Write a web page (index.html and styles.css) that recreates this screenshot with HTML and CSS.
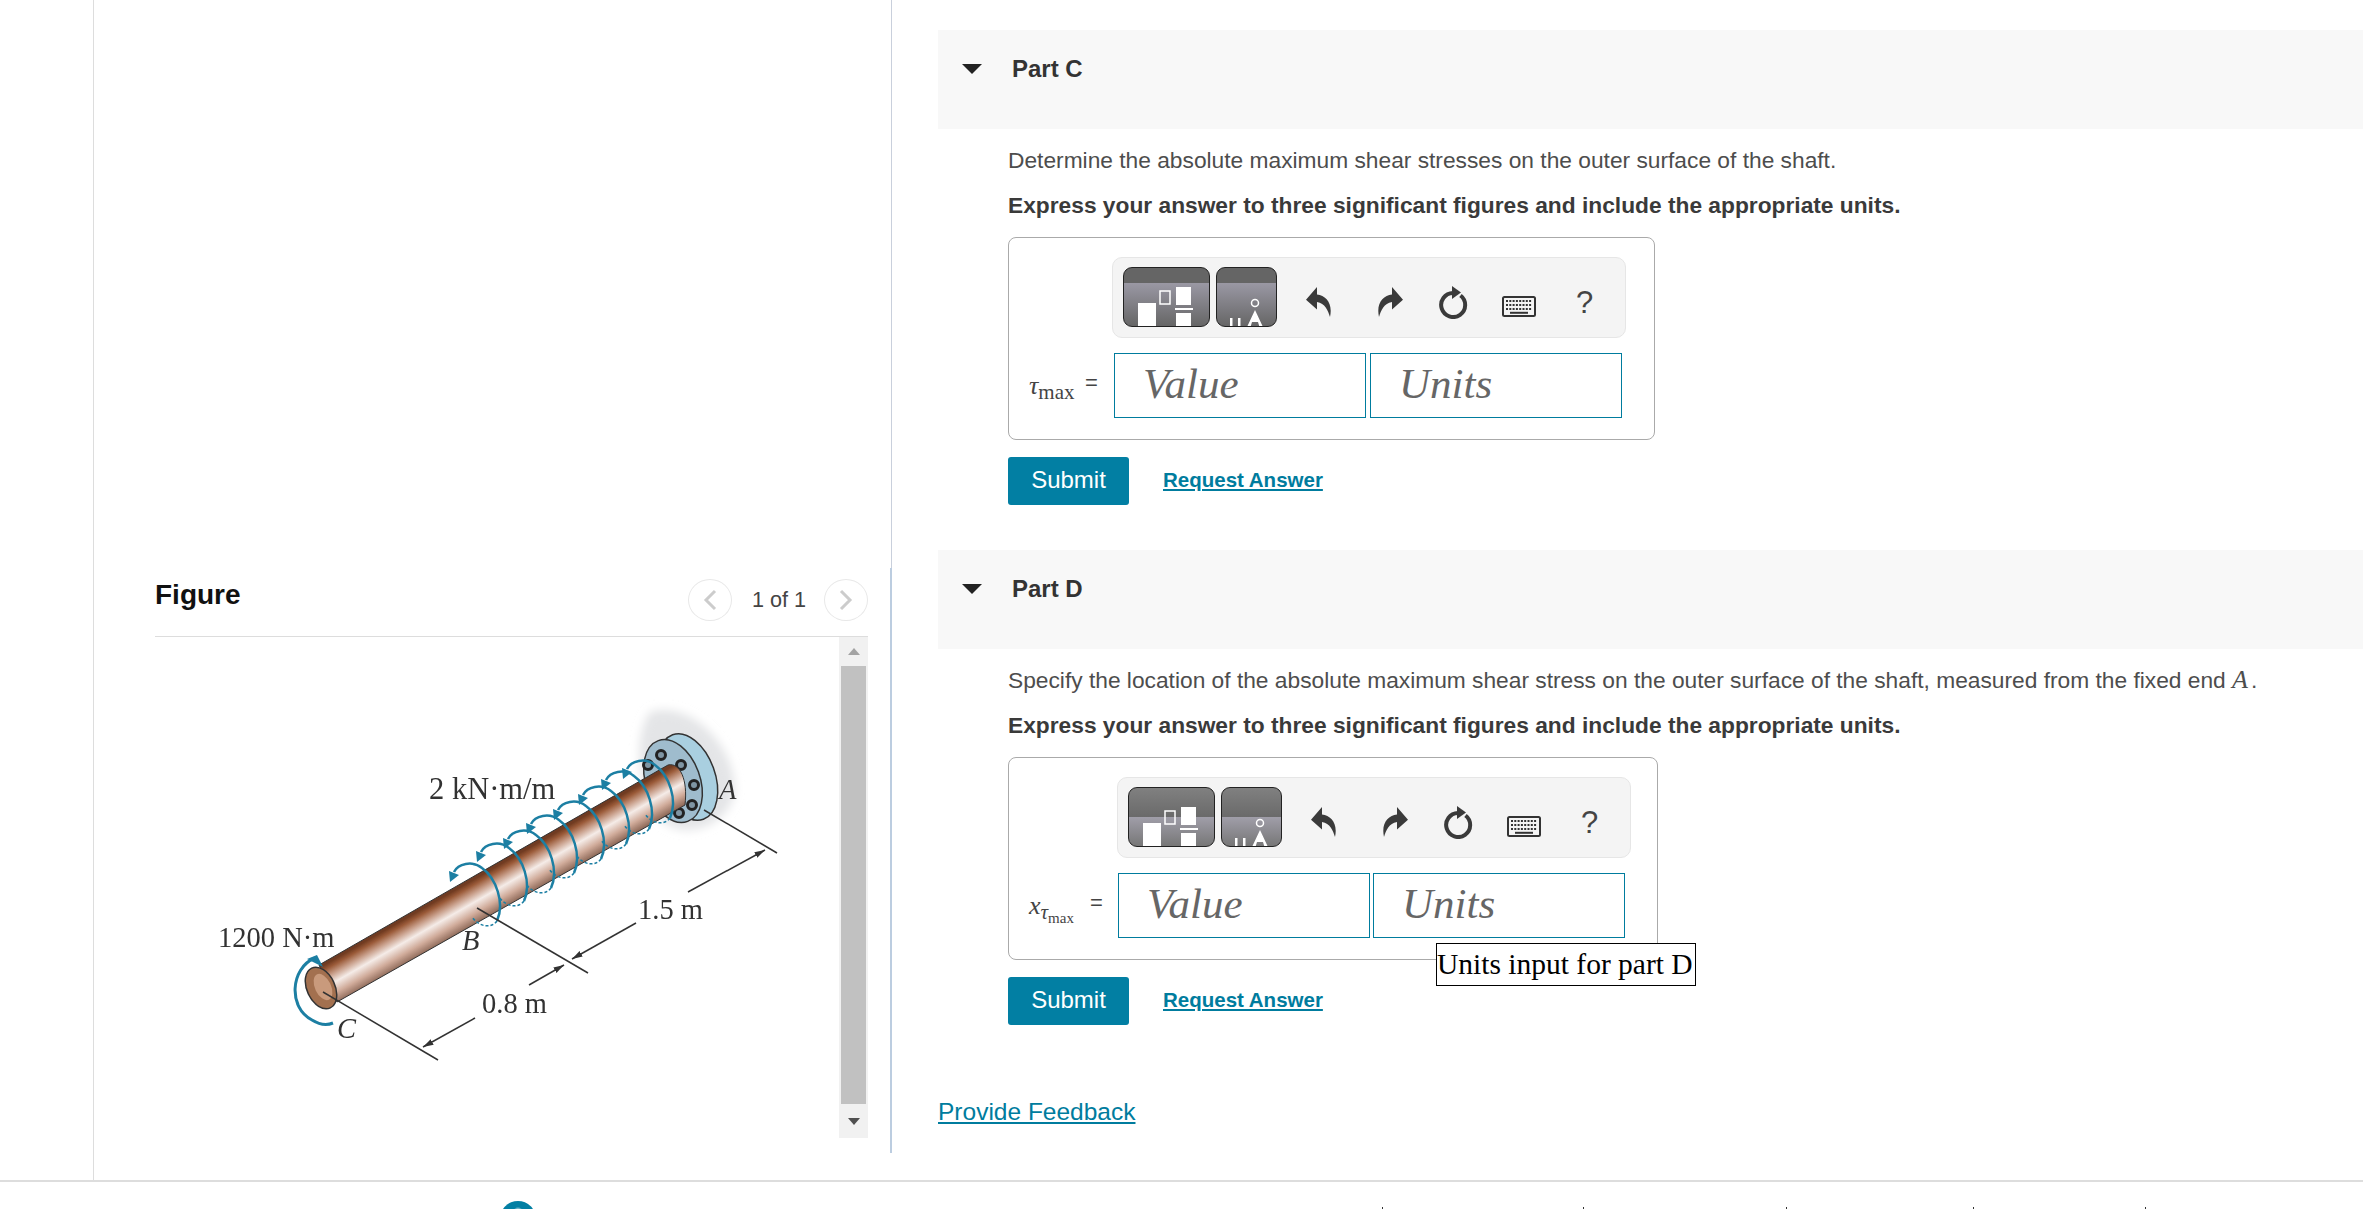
FILE: index.html
```html
<!DOCTYPE html>
<html lang="en">
<head>
<meta charset="utf-8">
<title>Parts C and D</title>
<link rel="stylesheet" href="styles.css">
</head>
<body>
<svg class="defs" width="0" height="0" aria-hidden="true">
  <defs>
    <symbol id="i-undo" viewBox="0 0 26 28" preserveAspectRatio="none"><path d="M0 12 L11 0 V7 C20 8 27 15 24 28 C22 22 19 15 11 14 V21 Z"/></symbol>
    <symbol id="i-reset" viewBox="0 0 30 33">
      <path class="ring" d="M22.500 9.500 A12 12 0 1 1 15 7"/>
      <path d="M14 0 L23 6.500 L14 13 Z"/>
    </symbol>
    <symbol id="i-kbd" viewBox="0 0 34 21">
      <rect x="1" y="1" width="32" height="19" rx="1.500" class="kbd-frame"/>
      <path class="kbd-keys" d="M4 5 H30 M4 9 H30 M4 13 H30"/>
      <path class="kbd-bar" d="M8 16.800 H26"/>
    </symbol>
    <symbol id="i-frac" viewBox="0 0 87 60">
      <rect x="15" y="36" width="18" height="24" class="fill-w"/>
      <rect x="37" y="24" width="10" height="13" class="line-w"/>
      <rect x="53" y="20" width="15" height="18" class="fill-w"/>
      <rect x="52" y="41" width="18" height="2" class="fill-w"/>
      <rect x="53" y="46" width="15" height="14" class="fill-w"/>
    </symbol>
    <symbol id="i-unit" viewBox="0 0 61 60">
      <path class="fill-w" d="M14 51 h2.500 v9 h-2.500 Z M22 51 h2.500 v9 h-2.500 Z"/>
      <circle cx="39" cy="36" r="3.500" class="line-w"/>
      <path class="fill-w" d="M39 43 L47 60 H43.500 L42 55 H36 L34.500 60 H31 Z"/>
    </symbol>
    <marker id="ah" viewBox="0 0 10 8" refX="10" refY="4" markerWidth="7" markerHeight="5.600" orient="auto-start-reverse"><path d="M0 1 L10 4 L0 7 Z" class="dim-head"/></marker>
    <linearGradient id="shaft" gradientUnits="userSpaceOnUse" x1="490" y1="870" x2="510" y2="905">
      <stop offset="0" stop-color="#6f3a20"/>
      <stop offset=".12" stop-color="#9a5a38"/>
      <stop offset=".3" stop-color="#c9a08c"/>
      <stop offset=".5" stop-color="#f5ece8"/>
      <stop offset=".75" stop-color="#d0ab9a"/>
      <stop offset="1" stop-color="#8a6554"/>
    </linearGradient>
    <filter id="soft" x="-5%" y="-5%" width="110%" height="110%"><feGaussianBlur stdDeviation=".55"/></filter>
    <filter id="wide" x="-30%" y="-30%" width="160%" height="160%"><feGaussianBlur stdDeviation="5"/></filter>
    <g id="loop">
      <path class="loop-b" d="M497 921 C492 928 480 928 472 917"/>
      <path class="loop" d="M454 872 C458 864 472 860 482 868 C496 878 505 903 497 921"/>
      <path class="loop-head" d="M450 882 L449 871 L459 875 Z"/>
    </g>
  </defs>
</svg>

<div class="top">
  <div class="col-left">
    <div class="left-spacer"></div>
    <div class="left-panel">
      <div class="figure">
        <div class="figure-head">
          <h2 class="figure-title">Figure</h2>
          <div class="pager">
            <span class="pager-btn"><svg width="14" height="22" viewBox="0 0 14 22"><path d="M12 2 L3 11 L12 20"/></svg></span>
            <span class="pager-text">1 of 1</span>
            <span class="pager-btn"><svg width="14" height="22" viewBox="0 0 14 22"><path d="M2 2 L11 11 L2 20"/></svg></span>
          </div>
        </div>
        <div class="figure-view">
          <svg class="diagram" width="600" height="400" viewBox="200 690 600 400" role="img" aria-label="Shaft fixed at A with torque loads">
            <g filter="url(#soft)">
              <path class="wall" filter="url(#wide)" d="M650 712 C690 700 735 745 735 790 C730 825 690 838 668 825 C640 810 630 740 650 712 Z"/>
              <ellipse cx="688" cy="777" rx="27" ry="45" transform="rotate(-20 688 777)" class="rim"/>
              <ellipse cx="673" cy="781" rx="27" ry="43" transform="rotate(-20 673 781)" class="face"/>
              <g class="bolts">
                <circle cx="661" cy="755" r="4.500"/><circle cx="681" cy="765" r="4.500"/>
                <circle cx="694" cy="785" r="4.500"/><circle cx="692" cy="805" r="4.500"/>
                <circle cx="679" cy="813" r="4.500"/><circle cx="648" cy="765" r="4.500"/>
              </g>
              <path class="shaft" d="M319 965 L668 765 C680 762 688 780 685 805 L337 1002 Z"/>
              <ellipse cx="321" cy="988" rx="14" ry="22" transform="rotate(-25 321 988)" class="tube-end"/>
              <ellipse cx="323" cy="987" rx="8" ry="14" transform="rotate(-25 323 987)" class="tube-in"/>
              <use href="#loop"/>
              <use href="#loop" x="27" y="-20"/>
              <use href="#loop" x="54" y="-33"/>
              <use href="#loop" x="77" y="-48"/>
              <use href="#loop" x="104" y="-62"/>
              <use href="#loop" x="129" y="-77"/>
              <use href="#loop" x="152" y="-92"/>
              <use href="#loop" x="173" y="-103"/>
              <path class="moment" d="M315 958 C290 968 288 1008 312 1020 C320 1025 328 1025 333 1023"/>
              <path class="moment-head" d="M307 959 L317 955 L323 967 Z"/>
              <g class="dims">
                <path d="M704 810 L777 853"/>
                <path d="M688 892 L765 850" marker-end="url(#ah)"/>
                <path d="M636 923 L572 959" marker-end="url(#ah)"/>
                <path d="M477 908 L588 973"/>
                <path d="M529 985 L564 965" marker-end="url(#ah)"/>
                <path d="M475 1018 L423 1047" marker-end="url(#ah)"/>
                <path d="M323 992 L438 1060"/>
              </g>
              <g class="fig-text">
                <text class="fig-load" x="429" y="799">2 kN·m/m</text>
                <text x="218" y="947">1200 N·m</text>
                <text x="638" y="919">1.5 m</text>
                <text x="482" y="1013">0.8 m</text>
                <text class="fig-it" x="719" y="799">A</text>
                <text class="fig-it" x="462" y="950">B</text>
                <text class="fig-it" x="337" y="1038">C</text>
              </g>
            </g>
          </svg>
          <div class="scrollbar">
            <span class="arrow-up"></span>
            <span class="thumb"></span>
            <span class="arrow-down"></span>
          </div>
        </div>
      </div>
    </div>
  </div>

  <main class="col-right">
    <section class="part">
      <header class="part-head"><span class="caret"></span><h3 class="part-title">Part C</h3></header>
      <div class="part-body">
        <p class="desc">Determine the absolute maximum shear stresses on the outer surface of the shaft.</p>
        <p class="instr">Express your answer to three significant figures and include the appropriate units.</p>
        <div class="answer answer-c">
          <div class="toolbar">
            <span class="tpl tpl-c tpl-a"><svg width="87" height="60"><use href="#i-frac"/></svg></span>
            <span class="tpl tpl-c tpl-b"><svg width="61" height="60"><use href="#i-unit"/></svg></span>
            <svg class="ico ico-undo" width="26" height="30"><use href="#i-undo"/></svg>
            <svg class="ico ico-redo" width="26" height="30"><use href="#i-undo"/></svg>
            <svg class="ico ico-reset" width="30" height="33"><use href="#i-reset"/></svg>
            <svg class="ico ico-kbd" width="34" height="21"><use href="#i-kbd"/></svg>
            <span class="help">?</span>
          </div>
          <div class="answer-row">
            <span class="math"><i class="tau">τ</i><span class="sub">max</span></span><span class="eq">=</span>
            <span class="field">Value</span><span class="field">Units</span>
          </div>
        </div>
        <div class="actions">
          <button class="submit" type="button">Submit</button>
          <a class="request" href="#">Request Answer</a>
        </div>
      </div>
    </section>

    <section class="part">
      <header class="part-head"><span class="caret"></span><h3 class="part-title">Part D</h3></header>
      <div class="part-body">
        <p class="desc">Specify the location of the absolute maximum shear stress on the outer surface of the shaft, measured from the fixed end <i class="math-a">A</i>.</p>
        <p class="instr">Express your answer to three significant figures and include the appropriate units.</p>
        <div class="answer answer-d">
          <div class="toolbar">
            <span class="tpl tpl-d tpl-a"><svg width="87" height="60"><use href="#i-frac"/></svg></span>
            <span class="tpl tpl-d tpl-b"><svg width="61" height="60"><use href="#i-unit"/></svg></span>
            <svg class="ico ico-undo" width="26" height="30"><use href="#i-undo"/></svg>
            <svg class="ico ico-redo" width="26" height="30"><use href="#i-undo"/></svg>
            <svg class="ico ico-reset" width="30" height="33"><use href="#i-reset"/></svg>
            <svg class="ico ico-kbd" width="34" height="21"><use href="#i-kbd"/></svg>
            <span class="help">?</span>
          </div>
          <div class="answer-row">
            <span class="math"><i class="tau">x</i><span class="sub"><i>τ</i><span class="subsub">max</span></span></span><span class="eq">=</span>
            <span class="field">Value</span><span class="field">Units</span>
          </div>
          <div class="tooltip">Units input for part D</div>
        </div>
        <div class="actions">
          <button class="submit" type="button">Submit</button>
          <a class="request" href="#">Request Answer</a>
        </div>
      </div>
    </section>

    <a class="feedback" href="#">Provide Feedback</a>
  </main>
</div>

<footer class="footer">
  <span class="foot-logo"></span>
  <span class="foot-tick foot-t1"></span>
  <span class="foot-tick foot-t2"></span>
  <span class="foot-tick foot-t3"></span>
  <span class="foot-tick foot-t4"></span>
  <span class="foot-tick foot-t5"></span>
</footer>
</body>
</html>
```

FILE: styles.css
```css
* { box-sizing: border-box; }
html, body { margin: 0; height: 1209px; overflow: hidden; background: #fff; }
body { font-family: "Liberation Sans", Arial, sans-serif; color: #444; }
.defs { display: block; height: 0; }

.top { display: flex; height: 1180px; margin-left: 93px; border-left: 1px solid #ddd; }
.col-left { width: 798px; flex: none; }
.left-spacer { height: 568px; border-right: 1px solid #c9d0dc; }
.left-panel { height: 585px; border-right: 2px solid #bccde0; padding-left: 61px; }
.figure { width: 713px; }
.figure-head { height: 69px; display: flex; align-items: flex-start; justify-content: space-between; border-bottom: 1px solid #ddd; }
.figure-title { margin: 11px 0 0; font-size: 28px; line-height: 32px; font-weight: 700; color: #111; }
.pager { display: flex; align-items: center; margin-top: 11px; }
.pager-btn { width: 44px; height: 42px; border: 1px solid #e8e8e8; border-radius: 50%; display: flex; align-items: center; justify-content: center; }
.pager-btn path { fill: none; stroke: #ccc; stroke-width: 3; }
.pager-text { width: 54px; white-space: nowrap; font-size: 21.600px; margin: 0 18px 0 20px; color: #444; }
.figure-view { display: flex; align-items: flex-start; padding-left: 45px; justify-content: space-between; }
.diagram { margin-top: 53px; flex: none; }
.scrollbar { width: 29px; height: 501px; background: #f1f1f1; display: flex; flex-direction: column; align-items: center; }
.arrow-up { width: 0; height: 0; margin: 11px 0 11px; border: 6.500px solid transparent; border-top: 0; border-bottom: 7px solid #a3a3a3; }
.thumb { width: 25px; height: 438px; background: #c1c1c1; flex: none; }
.arrow-down { width: 0; height: 0; margin-top: 14px; border: 6.500px solid transparent; border-bottom: 0; border-top: 7px solid #505050; }

.wall { fill: #e4e5e7; }
.rim { fill: #a9cfe0; stroke: #333; stroke-width: 1.500; }
.face { fill: #9fbccd; stroke: #333; stroke-width: 1.500; }
.bolts circle { fill: #7f95a3; stroke: #222; stroke-width: 3; }
.shaft { fill: url(#shaft); stroke: #333; stroke-width: 1; }
.tube-end { fill: #a3704f; stroke: #333; stroke-width: 1.500; }
.tube-in { fill: #c99a7c; }
.loop { fill: none; stroke: #1d7fa3; stroke-width: 2.500; }
.loop-b { fill: none; stroke: #1d7fa3; stroke-width: 1.500; stroke-dasharray: 3 2; }
.loop-head, .moment-head { fill: #1d7fa3; }
.moment { fill: none; stroke: #1d7fa3; stroke-width: 3; }
.dims path { fill: none; stroke: #333; stroke-width: 1.500; }
.dim-head { fill: #333; }
.fig-text text { font-family: "Liberation Serif", serif; font-size: 28.500px; fill: #333; }
.fig-text .fig-it { font-style: italic; }
.fig-text .fig-load { font-size: 30.500px; }

.col-right { flex: 1; min-width: 0; padding: 30px 0 0 46px; }
.part { margin-bottom: 45px; }
.part-head { height: 99px; background: #f8f8f8; display: flex; align-items: flex-start; padding: 0 0 0 24px; }
.caret { width: 0; height: 0; margin-top: 34px; border: 10px solid transparent; border-bottom: 0; border-top: 10px solid #222; }
.part-title { margin: 25px 0 0 30px; font-size: 24px; line-height: 28px; font-weight: 700; color: #333; }
.part-body { padding: 17px 0 0 70px; }
.desc { margin: 0; font-size: 22.750px; line-height: 28px; color: #4d4d4d; white-space: nowrap; }
.math-a { font-family: "Liberation Serif", serif; font-size: 26px; margin-right: 3px; }
.instr { margin: 17px 0 0; font-size: 22.750px; line-height: 28px; font-weight: 700; color: #3a3a3a; white-space: nowrap; }

.answer { position: relative; height: 203px; margin-top: 18px; border: 1px solid #aaa; border-radius: 8px; padding-top: 19px; }
.answer-c { width: 647px; }
.answer-d { width: 650px; }
.toolbar { height: 81px; width: 514px; background: #f4f4f4; border: 1px solid #e6e6e6; border-radius: 10px; display: flex; align-items: flex-start; }
.answer-c .toolbar { margin-left: 103px; }
.answer-d .toolbar { margin-left: 108px; }
.tpl { height: 60px; margin-top: 9px; border: 1px solid #222; border-radius: 9px; overflow: hidden; flex: none; display: block; }
.tpl svg { display: block; margin: -1px; }
.tpl-a { width: 87px; margin-left: 10px; }
.tpl-b { width: 61px; margin-left: 6px; }
.tpl-c { background: linear-gradient(#656565 0 15px, #9a98a4 15px, #666 100%); }
.tpl-d { background: linear-gradient(#808080 0, #6a6a6a 29px, #a09ea9 29px, #777 100%); }
.fill-w { fill: #fff; }
.line-w { fill: none; stroke: #fff; stroke-width: 1.500; }
.ico { flex: none; fill: #3a3a3a; margin-top: 29px; }
.ico-undo { margin-left: 29px; }
.ico-redo { margin-left: 45px; transform: scaleX(-1); }
.ico-reset { margin-left: 35px; margin-top: 28px; }
.ring { fill: none; stroke: #3a3a3a; stroke-width: 4; }
.ico-kbd { margin-left: 34px; margin-top: 38px; }
.kbd-frame { fill: #f4f4f4; stroke: #333; stroke-width: 2; }
.kbd-keys { fill: none; stroke: #333; stroke-width: 2; stroke-dasharray: 2 1.300; }
.kbd-bar { fill: none; stroke: #333; stroke-width: 2; }
.help { font-size: 31px; line-height: 36px; margin: 27px 0 0 40px; color: #444; }

.answer-row { display: flex; align-items: flex-start; margin-top: 15px; padding-left: 20px; }
.math { font-family: "Liberation Serif", serif; font-size: 26px; line-height: 65px; color: #444; display: inline-block; white-space: nowrap; flex: none; }
.answer-c .math { width: 56px; }
.answer-d .math { width: 61px; }
.tau { font-style: italic; }
.sub { font-size: 21px; position: relative; top: 5px; }
.subsub { font-size: 15px; position: relative; top: 4px; }
.eq { width: 13px; flex: none; font-size: 22px; line-height: 60px; }
.answer-c .eq { margin-right: 16px; }
.answer-d .eq { margin-right: 15px; }
.field { display: block; flex: none; width: 252px; height: 65px; border: 1px solid #007c9e; padding-left: 28px; font-family: "Liberation Serif", serif; font-style: italic; font-size: 43px; line-height: 60px; color: #666; }
.answer-c .field + .field { margin-left: 4px; }
.answer-d .field + .field { margin-left: 3px; }
.tooltip { position: absolute; left: 427px; top: 185px; width: 260px; height: 43px; background: #fff; border: 1px solid #000; font-family: "Liberation Serif", serif; font-size: 29.500px; line-height: 40px; color: #000; white-space: nowrap; }

.actions { display: flex; align-items: center; margin-top: 17px; }
.submit { width: 121px; height: 48px; padding: 0 0 2px; border: 0; border-radius: 3px; background: #027fa3; color: #fff; font-family: inherit; font-size: 24px; }
.request { margin-left: 34px; margin-top: -2px; font-size: 20.500px; font-weight: 700; color: #007c9e; text-decoration: underline; }
.feedback { display: inline-block; font-size: 24.500px; line-height: 28px; color: #007c9e; text-decoration: underline; margin-top: 28px; }

.footer { height: 29px; border-top: 2px solid #ddd; display: grid; grid-template-columns: 500px 36px 847px 201px 203px 187px 172px; overflow: hidden; }
.foot-logo { grid-column: 2; width: 36px; height: 36px; margin-top: 19px; border-radius: 50%; background: radial-gradient(circle at 50% 30%, #cfe3ea 0 2px, #027fa3 5px); }
.foot-tick { width: 1px; height: 3px; margin-top: 25px; background: #333; justify-self: end; }
.foot-t1 { grid-column: 3; }
.foot-t2 { grid-column: 4; }
.foot-t3 { grid-column: 5; }
.foot-t4 { grid-column: 6; }
.foot-t5 { grid-column: 7; }
```
